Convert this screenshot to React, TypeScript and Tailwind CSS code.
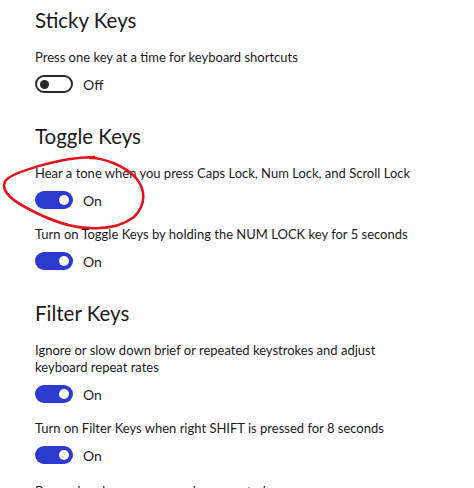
const font = { fontFamily: 'Lato, "Noto Sans", sans-serif' };

function Toggle({ on }: { on: boolean }) {
  return (
    <div className="mt-[8px] flex h-[20px] items-center">
      {on ? (
        <span className="flex h-[18px] w-[38px] items-center justify-end rounded-full bg-[#2c3acf] pr-[4px]">
          <span className="h-[10px] w-[10px] rounded-full bg-white" />
        </span>
      ) : (
        <span className="flex h-[18px] w-[38px] items-center rounded-full border-2 border-[#2a2a2a] pl-[3px]">
          <span className="h-[9px] w-[9px] rounded-full bg-[#2a2a2a]" />
        </span>
      )}
      <span className="ml-[10px] text-[14px] text-[#1b1b1b]">{on ? 'On' : 'Off'}</span>
    </div>
  );
}

function Setting({ label, on, first }: { label: string; on: boolean; first?: boolean }) {
  return (
    <div className={first ? 'mt-[14px]' : 'mt-[16px]'}>
      <p className="max-w-[395px] text-[13px] leading-[17px] text-[#1b1b1b]">{label}</p>
      <Toggle on={on} />
    </div>
  );
}

function Section({ title, items, first }: { title: string; items: { label: string; on: boolean }[]; first?: boolean }) {
  return (
    <section className={first ? '' : 'mt-[27px]'}>
      <h2 className="h-[30px] text-[20.5px] font-normal leading-[30px] text-[#1a1a1a]">{title}</h2>
      {items.map((it, i) => (
        <Setting key={i} label={it.label} on={it.on} first={i === 0} />
      ))}
    </section>
  );
}

// hand-drawn annotation loop around the first Toggle Keys switch
function RedLoop() {
  return (
    <svg className="pointer-events-none absolute left-0 top-0" width="474" height="488" viewBox="0 0 474 488">
      <path
        d="M90 158 C105 158 125 166 136 178 C146 190 146 205 134 217 C122 226 105 229 90 228 C70 228 45 218 25 207 C8 198 0 188 6 180 C14 172 50 162 70 159 C78 158 85 157 94 157"
        fill="none"
        stroke="#e3141c"
        strokeWidth="2.6"
        strokeLinecap="round"
      />
    </svg>
  );
}

export default function App() {
  return (
    <div className="relative h-[488px] w-[474px] overflow-hidden bg-white" style={font}>
      <div className="pl-[35px] pt-[5px]">
        <Section
          first
          title="Sticky Keys"
          items={[{ label: 'Press one key at a time for keyboard shortcuts', on: false }]}
        />
        <Section
          title="Toggle Keys"
          items={[
            { label: 'Hear a tone when you press Caps Lock, Num Lock, and Scroll Lock', on: true },
            { label: 'Turn on Toggle Keys by holding the NUM LOCK key for 5 seconds', on: true },
          ]}
        />
        <Section
          title="Filter Keys"
          items={[
            { label: 'Ignore or slow down brief or repeated keystrokes and adjust keyboard repeat rates', on: true },
            { label: 'Turn on Filter Keys when right SHIFT is pressed for 8 seconds', on: true },
          ]}
        />
        <p className="mt-[18px] text-[13px] leading-[17px] text-[#1b1b1b]">Beep when keys are pressed or accepted</p>
      </div>
      <RedLoop />
    </div>
  );
}
